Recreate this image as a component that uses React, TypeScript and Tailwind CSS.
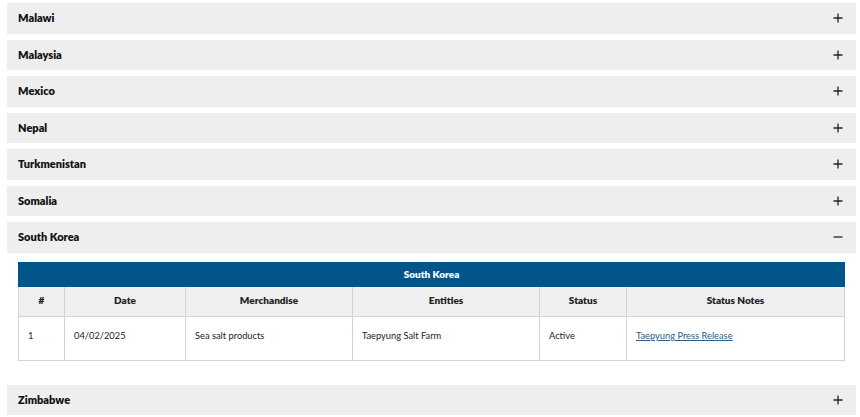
const COUNTRIES_BEFORE = ["Malawi", "Malaysia", "Mexico", "Nepal", "Turkmenistan", "Somalia"];

const COLUMNS = [
  { label: "#", width: "w-[46px]" },
  { label: "Date", width: "w-[121px]" },
  { label: "Merchandise", width: "w-[167px]" },
  { label: "Entities", width: "w-[187px]" },
  { label: "Status", width: "w-[87px]" },
  { label: "Status Notes", width: "" },
];

function PlusIcon() {
  return (
    <svg width="10" height="10" viewBox="0 0 10 10" className="text-[#222]">
      <path d="M5 0.5v9M0.5 5h9" stroke="currentColor" strokeWidth="1.3" />
    </svg>
  );
}

function MinusIcon() {
  return (
    <svg width="10" height="10" viewBox="0 0 10 10" className="text-[#222]">
      <path d="M0.5 5h9" stroke="currentColor" strokeWidth="1.3" />
    </svg>
  );
}

function AccordionHeader({ label, open }: { label: string; open?: boolean }) {
  return (
    <div className="h-[30.5px] bg-[#eeeeee] flex items-center justify-between pl-[11px] pr-[13px]">
      <span className="text-[11px] font-extrabold text-[#111]">{label}</span>
      {open ? <MinusIcon /> : <PlusIcon />}
    </div>
  );
}

export default function App() {
  return (
    <div
      className="bg-white w-[860px] h-[417px] overflow-hidden px-[7px] pt-[3px] pr-[4px]"
      style={{ fontFamily: "Lato, 'Noto Sans', sans-serif" }}
    >
      <div className="flex flex-col gap-[6px]">
        {COUNTRIES_BEFORE.map((c) => (
          <AccordionHeader key={c} label={c} />
        ))}
        <div>
          <AccordionHeader label="South Korea" open />
          <div className="pt-[9px] px-[11px] pb-[18px]">
            <table className="w-full border-collapse text-[9.3px] text-[#222]">
              <thead>
                <tr>
                  <th
                    colSpan={6}
                    className="bg-[#02558b] text-white font-extrabold text-[10px] h-[24px] border border-[#02558b]"
                  >
                    South Korea
                  </th>
                </tr>
                <tr className="bg-[#efefef]">
                  {COLUMNS.map((col) => (
                    <th
                      key={col.label}
                      className={`${col.width} h-[30px] pb-[2px] border border-[#d4d4d4] font-extrabold text-[10px] text-center`}
                    >
                      {col.label}
                    </th>
                  ))}
                </tr>
              </thead>
              <tbody>
                <tr className="h-[44px]">
                  <td className="border border-[#d4d4d4] px-[9px] pb-[5px]">1</td>
                  <td className="border border-[#d4d4d4] px-[9px] pb-[5px]">04/02/2025</td>
                  <td className="border border-[#d4d4d4] px-[9px] pb-[5px]">Sea salt products</td>
                  <td className="border border-[#d4d4d4] px-[9px] pb-[5px]">Taepyung Salt Farm</td>
                  <td className="border border-[#d4d4d4] px-[9px] pb-[5px]">Active</td>
                  <td className="border border-[#d4d4d4] px-[9px] pb-[5px]">
                    <a href="#" className="text-[#2a5d85] underline">
                      Taepyung Press Release
                    </a>
                  </td>
                </tr>
              </tbody>
            </table>
          </div>
        </div>
      </div>
      <div className="mt-[6px]">
        <AccordionHeader label="Zimbabwe" />
      </div>
    </div>
  );
}
